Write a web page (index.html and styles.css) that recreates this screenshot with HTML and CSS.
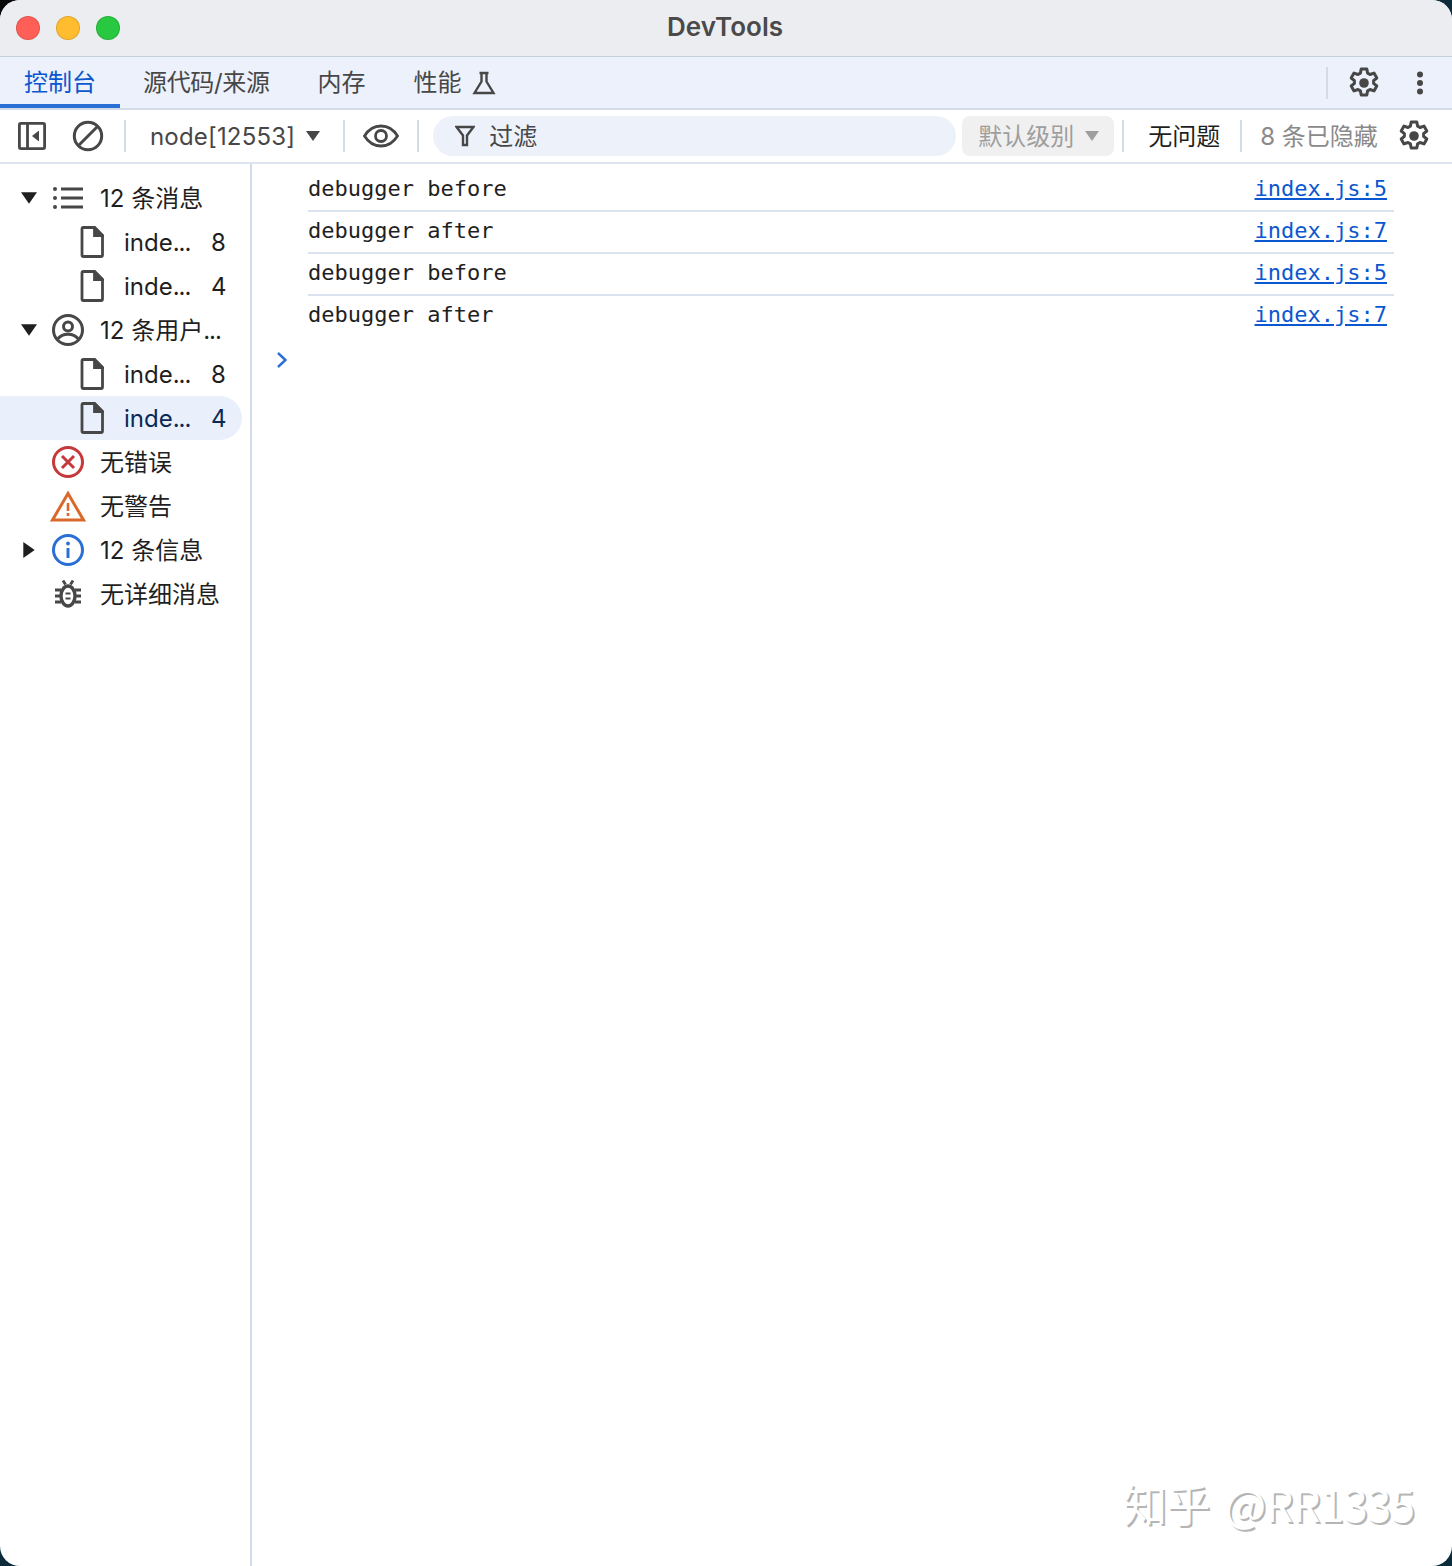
FILE: index.html
```html
<!DOCTYPE html>
<html lang="zh">
<head>
<meta charset="utf-8">
<title>DevTools</title>
<link rel="stylesheet" href="styles.css">
</head>
<body>
<div class="window">
  <header class="titlebar">
    <div class="lights"><span class="light red"></span><span class="light yellow"></span><span class="light green"></span></div>
    <div class="title">DevTools</div>
  </header>
  <nav class="tabs">
    <div class="tab active"><span class="cjk">控制台</span></div>
    <div class="tab tab-source"><span class="cjk">源代码/来源</span></div>
    <div class="tab"><span class="cjk">内存</span></div>
    <div class="tab"><span class="cjk">性能</span>
      <svg class="flask" viewBox="0 0 24 24" width="24" height="24" fill="none" stroke="#474747" stroke-width="2.400"><path d="M7.500 2h9M9.500 2v8.500L2.500 22h19l-7-11.500V2"/></svg>
    </div>
    <div class="tab-spacer"></div>
    <div class="sep tab-sep"></div>
    <svg class="ico gear-top" viewBox="0 0 32 32" width="32" height="32"><use href="#gear"/></svg>
    <svg class="ico kebab" viewBox="0 0 8 24" width="8" height="24" fill="#474747"><circle cx="4" cy="3.500" r="3"/><circle cx="4" cy="12" r="3"/><circle cx="4" cy="20.500" r="3"/></svg>
  </nav>
  <div class="toolbar">
    <svg class="tb-panel" viewBox="0 0 28 28" width="28" height="28" fill="none" stroke="#474747" stroke-width="2.800"><rect x="1.400" y="1.400" width="25.200" height="25.200" rx="1.500"/><path d="M9.500 1v26"/><path d="M21 8.500v11l-7-5.500z" fill="#474747" stroke="none"/></svg>
    <svg class="tb-clear" viewBox="0 0 32 32" width="32" height="32" fill="none" stroke="#474747" stroke-width="3"><circle cx="16" cy="16" r="13.700"/><path d="M6.500 25.500l19-19"/></svg>
    <div class="sep sep-a"></div>
    <div class="context">node[12553]</div>
    <svg class="caret" viewBox="0 0 14 10" width="14" height="10" fill="#474747"><path d="M0 0h14L7 10z"/></svg>
    <div class="sep sep-b"></div>
    <svg class="tb-eye" viewBox="0 0 36 24" width="36" height="24" fill="none" stroke="#474747" stroke-width="2.800"><path d="M1.500 12C5.500 5.500 11 2 18 2s12.500 3.500 16.500 10C30.500 18.500 25 22 18 22S5.500 18.500 1.500 12z"/><circle cx="18" cy="12" r="5.500"/></svg>
    <div class="sep sep-c"></div>
    <div class="filter">
      <svg viewBox="0 0 20 22" width="20" height="22" fill="none" stroke="#474747" stroke-width="2.400"><path d="M1.500 2h17l-6.500 8.500V20h-4v-9.500z"/></svg>
      <span class="filter-label cjk">过滤</span>
    </div>
    <div class="levels"><span class="cjk">默认级别</span><svg viewBox="0 0 14 10" width="14" height="10" fill="#9e9e9e"><path d="M0 0h14L7 10z"/></svg></div>
    <div class="sep sep-d"></div>
    <div class="issues cjk">无问题</div>
    <div class="sep sep-e"></div>
    <div class="hidden-count cjk">8 条已隐藏</div>
    <svg class="ico gear-bar" viewBox="0 0 32 32" width="32" height="32"><use href="#gear"/></svg>
  </div>
  <main class="main">
    <aside class="sidebar">
      <div class="row"><span class="arrow"><svg viewBox="0 0 14 10" width="16" height="12" fill="#1f1f1f"><path d="M0 0h14L7 10z"/></svg></span>
        <span class="icon"><svg viewBox="0 0 32 24" width="32" height="24" fill="#474747"><circle cx="3" cy="3" r="2"/><circle cx="3" cy="12" r="2"/><circle cx="3" cy="21" r="2"/><path d="M9 1.500h22v3H9zM9 10.500h22v3H9zM9 19.500h22v3H9z"/></svg></span>
        <span class="label cjk">12 条消息</span></div>
      <div class="row sub"><span class="file"><svg viewBox="0 0 24 32" width="24" height="32" fill="none" stroke="#474747" stroke-width="2.800"><path d="M3.500 1.500h11l8 8v19.500a1.500 1.500 0 0 1-1.500 1.500H3.500A1.500 1.500 0 0 1 2 29V3a1.500 1.500 0 0 1 1.500-1.500z"/><path d="M14.500 1.500v8h8z" fill="#474747"/></svg></span><span class="name">inde<span class="dots">...</span></span><span class="count">8</span></div>
      <div class="row sub"><span class="file"><svg viewBox="0 0 24 32" width="24" height="32" fill="none" stroke="#474747" stroke-width="2.800"><path d="M3.500 1.500h11l8 8v19.500a1.500 1.500 0 0 1-1.500 1.500H3.500A1.500 1.500 0 0 1 2 29V3a1.500 1.500 0 0 1 1.500-1.500z"/><path d="M14.500 1.500v8h8z" fill="#474747"/></svg></span><span class="name">inde<span class="dots">...</span></span><span class="count">4</span></div>
      <div class="row"><span class="arrow"><svg viewBox="0 0 14 10" width="16" height="12" fill="#1f1f1f"><path d="M0 0h14L7 10z"/></svg></span>
        <span class="icon"><svg viewBox="0 0 32 32" width="32" height="32" fill="none" stroke="#474747" stroke-width="3"><circle cx="16" cy="16" r="14.500"/><circle cx="16" cy="12.500" r="4.500"/><path d="M5.500 25c3-3.500 6.500-4.800 10.500-4.800s7.500 1.300 10.500 4.800"/></svg></span>
        <span class="label cjk">12 条用户<span class="dots">...</span></span></div>
      <div class="row sub"><span class="file"><svg viewBox="0 0 24 32" width="24" height="32" fill="none" stroke="#474747" stroke-width="2.800"><path d="M3.500 1.500h11l8 8v19.500a1.500 1.500 0 0 1-1.500 1.500H3.500A1.500 1.500 0 0 1 2 29V3a1.500 1.500 0 0 1 1.500-1.500z"/><path d="M14.500 1.500v8h8z" fill="#474747"/></svg></span><span class="name">inde<span class="dots">...</span></span><span class="count">8</span></div>
      <div class="row sub selected"><span class="file"><svg viewBox="0 0 24 32" width="24" height="32" fill="none" stroke="#474747" stroke-width="2.800"><path d="M3.500 1.500h11l8 8v19.500a1.500 1.500 0 0 1-1.500 1.500H3.500A1.500 1.500 0 0 1 2 29V3a1.500 1.500 0 0 1 1.500-1.500z"/><path d="M14.500 1.500v8h8z" fill="#474747"/></svg></span><span class="name">inde<span class="dots">...</span></span><span class="count">4</span></div>
      <div class="row"><span class="arrow"></span>
        <span class="icon"><svg viewBox="0 0 32 32" width="32" height="32" fill="none" stroke="#c5393a" stroke-width="3"><circle cx="16" cy="16" r="14.500"/><path d="M10 10l12 12M22 10L10 22"/></svg></span>
        <span class="label cjk">无错误</span></div>
      <div class="row"><span class="arrow"></span>
        <span class="icon"><svg viewBox="0 0 36 32" width="36" height="32" fill="none" stroke="#d9692b" stroke-width="3"><path d="M18 3.500L2.500 30h31z"/><path d="M18 13v8M18 23v3" stroke-width="2.600"/></svg></span>
        <span class="label cjk">无警告</span></div>
      <div class="row"><span class="arrow arrow-right"><svg viewBox="0 0 10 14" width="12" height="16" fill="#1f1f1f"><path d="M0 0l10 7-10 7z"/></svg></span>
        <span class="icon"><svg viewBox="0 0 32 32" width="32" height="32" fill="none" stroke="#2a6fd6" stroke-width="3"><circle cx="16" cy="16" r="14.500"/><path d="M16 14v10" stroke-width="3"/><circle cx="16" cy="9.500" r="1.900" fill="#2a6fd6" stroke="none"/></svg></span>
        <span class="label cjk">12 条信息</span></div>
      <div class="row"><span class="arrow"></span>
        <span class="icon"><svg viewBox="0 0 26 28" width="26" height="28" fill="none" stroke="#474747" stroke-width="2.800"><path d="M8 0.500l2.500 4M18 0.500l-2.500 4"/><ellipse cx="13" cy="16" rx="7" ry="10" stroke-width="3.400"/><path d="M0 10h6M0 16h6M0 22h6M20 10h6M20 16h6M20 22h6"/><path d="M10.500 13.500h5M10.500 18.500h5" stroke-width="2"/></svg></span>
        <span class="label cjk">无详细消息</span></div>
    </aside>
    <section class="console">
      <div class="msg"><span class="text">debugger before</span><a class="src">index.js:5</a></div>
      <div class="msg"><span class="text">debugger after</span><a class="src">index.js:7</a></div>
      <div class="msg"><span class="text">debugger before</span><a class="src">index.js:5</a></div>
      <div class="msg last"><span class="text">debugger after</span><a class="src">index.js:7</a></div>
      <svg class="prompt" viewBox="0 0 12 18" width="12" height="18" fill="none" stroke="#2a6fd6" stroke-width="2.400"><path d="M2 2l7.500 7L2 16"/></svg>
    </section>
  </main>
  <div class="watermark">知乎 @RR1335</div>
</div>
<svg class="defs" width="0" height="0">
  <defs>
    <g id="gear">
      <path fill="none" stroke="#474747" stroke-width="3" stroke-linejoin="round" d="M13.200 2h5.600l.8 4.100 2.400 1.400 4-1.400 2.800 4.900-3.200 2.700v2.600l3.200 2.700-2.800 4.900-4-1.400-2.400 1.400-.8 4.100h-5.600l-.8-4.100-2.400-1.400-4 1.400-2.800-4.900 3.200-2.700v-2.600L3.200 11l2.800-4.900 4 1.400 2.400-1.400z"/>
      <circle cx="16" cy="16" r="4.800" fill="#474747"/>
    </g>
  </defs>
</svg>
</body>
</html>
```
FILE: styles.css
```css
* { box-sizing: border-box; }
html, body { margin: 0; padding: 0; height: 100%; }
body {
  background: linear-gradient(135deg, #0a0a0a 0 4%, #0c2c3c 4% 100%);
  font-family: Inter, "Noto Sans CJK SC", sans-serif;
  overflow: hidden;
}
svg { flex: none; }
.cjk { padding-bottom: 4px; }
.window {
  position: relative;
  width: 1452px;
  height: 1566px;
  background: #fff;
  border-radius: 20px;
  overflow: hidden;
  display: flex;
  flex-direction: column;
}
.titlebar {
  height: 57px;
  flex: none;
  background: #ecedf0;
  border-bottom: 1px solid #c6cfdc;
  position: relative;
  display: flex;
  align-items: center;
  padding-left: 16px;
}
.lights { display: flex; gap: 16px; }
.light { width: 24px; height: 24px; border-radius: 50%; border: 1px solid rgba(0,0,0,.12); }
.red { background: #ff5f57; }
.yellow { background: #febc2e; }
.green { background: #28c840; }
.title {
  position: absolute;
  left: 0; right: 2px; top: 10px;
  text-align: center;
  font-size: 26px;
  line-height: 34px;
  font-weight: 600;
  color: #4a4a4a;
  font-family: Inter, sans-serif;
}
.tabs {
  height: 53px;
  flex: none;
  background: #ecf1fb;
  border-bottom: 2px solid #d3dbe9;
  display: flex;
  align-items: center;
  color: #474747;
  font-size: 24px;
}
.tab { height: 51px; padding: 0 24px; display: flex; align-items: center; gap: 10px; white-space: nowrap; }
.tab.active { color: #0b57d0; border-bottom: 4px solid #2a6fd6; width: 120px; padding: 4px 24px 0; }
.tab-source { padding-left: 23px; letter-spacing: -0.34px; }
.tab-spacer { flex: 1; }
.sep { width: 2px; height: 32px; background: #d3dbe9; flex: none; }
.tab-sep { margin-right: 20px; }
.kebab { margin: 0 28px 0 36px; }
.toolbar {
  height: 54px;
  flex: none;
  border-bottom: 2px solid #dfe5f0;
  display: flex;
  align-items: center;
  font-size: 24px;
  color: #474747;
  padding-left: 18px;
}
.tb-clear { margin-left: 26px; margin-right: 20px; }
.context { margin-left: 24px; white-space: nowrap; letter-spacing: 0.18px; }
.caret { margin-left: 11px; margin-right: 23px; }
.tb-eye { margin-left: 18px; margin-right: 18px; }
.filter {
  margin-left: 14px;
  width: 523px;
  height: 40px;
  border-radius: 20px;
  background: #edf2fa;
  display: flex;
  align-items: center;
  padding-left: 22px;
}
.filter-label { margin-left: 14px; color: #474747; }
.levels {
  margin-left: 6px;
  width: 152px;
  height: 40px;
  border-radius: 8px;
  background: #f0f0f0;
  color: #9e9e9e;
  display: flex;
  align-items: center;
  gap: 11px;
  padding-left: 16px;
}
.sep-d { margin-left: 8px; }
.issues { margin-left: 24px; color: #1f1f1f; white-space: nowrap; }
.sep-e { margin-left: 20px; }
.hidden-count { margin-left: 18px; color: #8a8a8a; white-space: nowrap; }
.gear-bar { margin-left: 20px; }
.main { flex: 1; display: flex; min-height: 0; }
.sidebar {
  width: 252px;
  flex: none;
  border-right: 2px solid #d3dbe9;
  padding-top: 12px;
  font-size: 24px;
  color: #1f1f1f;
}
.row { height: 44px; display: flex; align-items: center; white-space: nowrap; width: 242px; }
.arrow { width: 52px; padding-left: 21px; display: flex; align-items: center; flex: none; }
.arrow-right { padding-left: 23px; }
.icon { width: 32px; flex: none; display: flex; align-items: center; justify-content: center; }
.label { margin-left: 16px; }
.sub { padding-left: 80px; }
.file { width: 24px; display: flex; flex: none; }
.name { margin-left: 20px; width: 68px; }
.dots { letter-spacing: -1px; }
.count { margin-left: 19px; }
.selected { background: #e9f0fc; border-radius: 0 22px 22px 0; color: #0a2a55; }
.console {
  flex: 1;
  padding: 6px 58px 0 56px;
  font-family: "DejaVu Sans Mono", monospace;
  font-size: 22px;
  color: #1f1f1f;
  position: relative;
}
.msg {
  height: 42px;
  border-bottom: 2px solid #d9e2ee;
  display: flex;
  justify-content: space-between;
  align-items: center;
  padding: 0 7px 4px 0;
}
.msg.last { border-bottom-color: transparent; }
.src { color: #0b57d0; text-decoration: underline; }
.prompt { display: block; margin: 13px 0 0 -32px; }
.watermark {
  position: absolute;
  left: 1123px;
  top: 1477px;
  font-family: "Noto Sans CJK SC", sans-serif;
  font-size: 44px;
  letter-spacing: -0.8px;
  word-spacing: 6px;
  line-height: 52px;
  color: #fff;
  text-shadow: 2px 2px 0 #b5b5b5;
  white-space: nowrap;
}
.defs { position: absolute; }
```
